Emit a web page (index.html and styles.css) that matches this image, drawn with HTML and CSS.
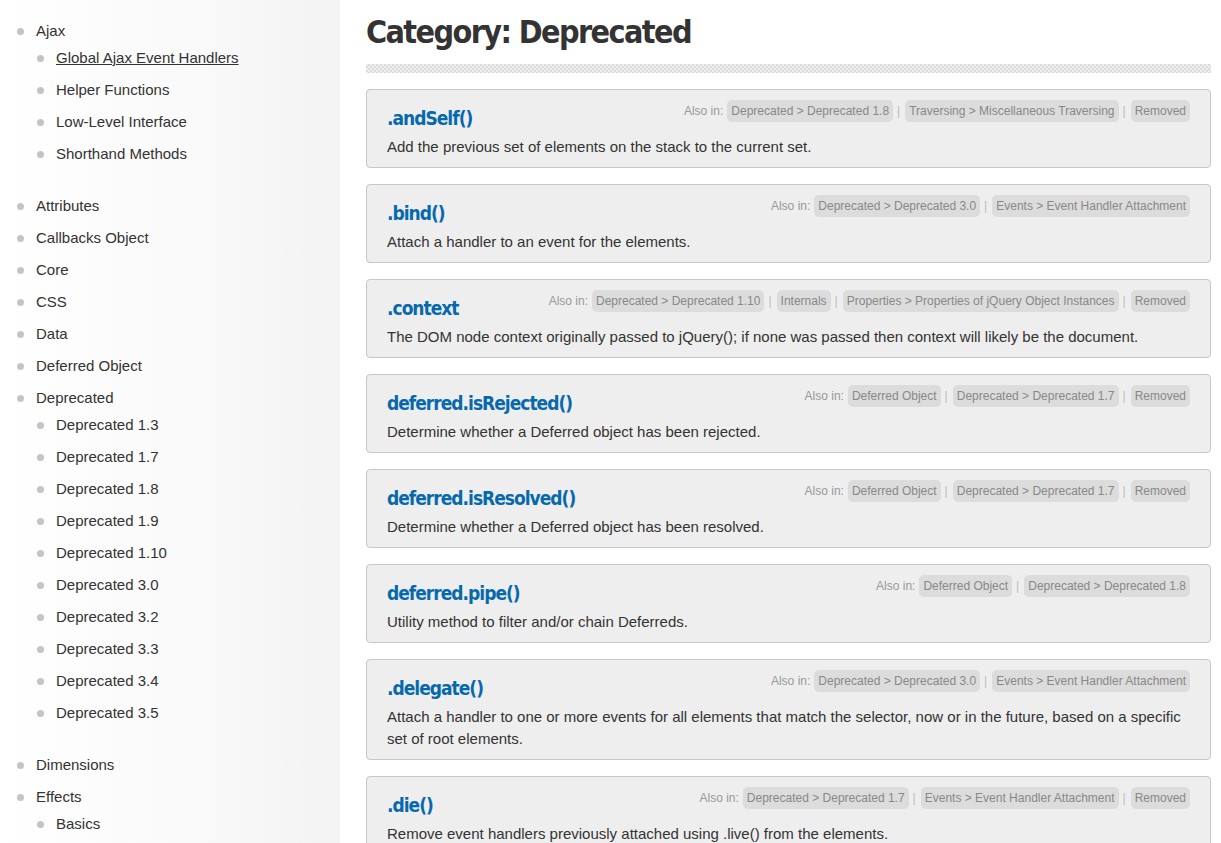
FILE: index.html
```html
<!DOCTYPE html>
<html>
<head>
<meta charset="utf-8">
<link rel="stylesheet" href="styles.css">
</head>
<body>
<div class="page">
  <aside class="sidebar">
    <ul class="nav">
      <li><span>Ajax</span>
        <ul class="sub">
          <li><a class="u">Global Ajax Event Handlers</a></li>
          <li>Helper Functions</li>
          <li>Low-Level Interface</li>
          <li>Shorthand Methods</li>
        </ul>
      </li>
      <li>Attributes</li>
      <li>Callbacks Object</li>
      <li>Core</li>
      <li>CSS</li>
      <li>Data</li>
      <li>Deferred Object</li>
      <li><span>Deprecated</span>
        <ul class="sub">
          <li>Deprecated 1.3</li>
          <li>Deprecated 1.7</li>
          <li>Deprecated 1.8</li>
          <li>Deprecated 1.9</li>
          <li>Deprecated 1.10</li>
          <li>Deprecated 3.0</li>
          <li>Deprecated 3.2</li>
          <li>Deprecated 3.3</li>
          <li>Deprecated 3.4</li>
          <li>Deprecated 3.5</li>
        </ul>
      </li>
      <li>Dimensions</li>
      <li><span>Effects</span>
        <ul class="sub">
          <li>Basics</li>
        </ul>
      </li>
    </ul>
  </aside>
  <main class="main">
    <h1 class="title">Category: Deprecated</h1>
    <div class="hatch"></div>

    <article class="card">
      <div class="head">
        <h2 class="name">.andSelf()</h2>
        <div class="also">Also in: <span class="tag">Deprecated &gt; Deprecated 1.8</span><span class="sep">|</span><span class="tag">Traversing &gt; Miscellaneous Traversing</span><span class="sep">|</span><span class="tag">Removed</span></div>
      </div>
      <p class="desc">Add the previous set of elements on the stack to the current set.</p>
    </article>

    <article class="card">
      <div class="head">
        <h2 class="name">.bind()</h2>
        <div class="also">Also in: <span class="tag">Deprecated &gt; Deprecated 3.0</span><span class="sep">|</span><span class="tag">Events &gt; Event Handler Attachment</span></div>
      </div>
      <p class="desc">Attach a handler to an event for the elements.</p>
    </article>

    <article class="card">
      <div class="head">
        <h2 class="name">.context</h2>
        <div class="also">Also in: <span class="tag">Deprecated &gt; Deprecated 1.10</span><span class="sep">|</span><span class="tag">Internals</span><span class="sep">|</span><span class="tag">Properties &gt; Properties of jQuery Object Instances</span><span class="sep">|</span><span class="tag">Removed</span></div>
      </div>
      <p class="desc">The DOM node context originally passed to jQuery(); if none was passed then context will likely be the document.</p>
    </article>

    <article class="card">
      <div class="head">
        <h2 class="name">deferred.isRejected()</h2>
        <div class="also">Also in: <span class="tag">Deferred Object</span><span class="sep">|</span><span class="tag">Deprecated &gt; Deprecated 1.7</span><span class="sep">|</span><span class="tag">Removed</span></div>
      </div>
      <p class="desc">Determine whether a Deferred object has been rejected.</p>
    </article>

    <article class="card">
      <div class="head">
        <h2 class="name">deferred.isResolved()</h2>
        <div class="also">Also in: <span class="tag">Deferred Object</span><span class="sep">|</span><span class="tag">Deprecated &gt; Deprecated 1.7</span><span class="sep">|</span><span class="tag">Removed</span></div>
      </div>
      <p class="desc">Determine whether a Deferred object has been resolved.</p>
    </article>

    <article class="card">
      <div class="head">
        <h2 class="name">deferred.pipe()</h2>
        <div class="also">Also in: <span class="tag">Deferred Object</span><span class="sep">|</span><span class="tag">Deprecated &gt; Deprecated 1.8</span></div>
      </div>
      <p class="desc">Utility method to filter and/or chain Deferreds.</p>
    </article>

    <article class="card">
      <div class="head">
        <h2 class="name">.delegate()</h2>
        <div class="also">Also in: <span class="tag">Deprecated &gt; Deprecated 3.0</span><span class="sep">|</span><span class="tag">Events &gt; Event Handler Attachment</span></div>
      </div>
      <p class="desc">Attach a handler to one or more events for all elements that match the selector, now or in the future, based on a specific set of root elements.</p>
    </article>

    <article class="card">
      <div class="head">
        <h2 class="name">.die()</h2>
        <div class="also">Also in: <span class="tag">Deprecated &gt; Deprecated 1.7</span><span class="sep">|</span><span class="tag">Events &gt; Event Handler Attachment</span><span class="sep">|</span><span class="tag">Removed</span></div>
      </div>
      <p class="desc">Remove event handlers previously attached using .live() from the elements.</p>
    </article>
  </main>
</div>
</body>
</html>
```
FILE: styles.css
```css
html, body {
  margin: 0;
  padding: 0;
  background: #fff;
  overflow: hidden;
}
body {
  font-family: "Liberation Sans", Arial, sans-serif;
  color: #333;
  height: 843px;
}
.page {
  display: flex;
  align-items: stretch;
  height: 843px;
}
.sidebar {
  width: 340px;
  flex: none;
  background: linear-gradient(to right, #ffffff 0%, #f9f9f9 60%, #f3f3f3 100%);
  padding-top: 20px;
  box-sizing: border-box;
}
.nav, .sub {
  list-style: none;
  margin: 0;
  padding: 0;
  display: flex;
  flex-direction: column;
  gap: 10px;
}
.nav {
  padding-left: 36px;
}
.sub {
  padding-left: 20px;
  margin-top: 5px;
  padding-bottom: 20px;
}
.nav li {
  font-size: 15px;
  line-height: 22px;
  color: #333;
  position: relative;
}
.nav li::before {
  content: "";
  position: absolute;
  left: -19px;
  top: 8px;
  width: 7px;
  height: 7px;
  border-radius: 50%;
  background: #c4c4c4;
}
.nav li > span { display: block; }
.u {
  text-decoration: underline;
  color: #333;
}
.main {
  flex: 1;
  padding: 0 10px 0 26px;
  min-width: 0;
}
.title {
  margin: 11px 0 0;
  font-family: "DejaVu Sans", sans-serif;
  font-stretch: condensed;
  font-weight: bold;
  font-size: 32px;
  line-height: 42px;
  color: #333;
  letter-spacing: -1.6px;
}
.hatch {
  margin-top: 11px;
  height: 9px;
  background: repeating-conic-gradient(#dadada 0 25%, #f0f0f0 0 50%) 0 0 / 4px 4px;
}
.card {
  margin-top: 16px;
  background: #eee;
  border: 1px solid #c7c7c7;
  border-radius: 4px;
  padding: 10px 20px 9px;
}
.head {
  display: flex;
  justify-content: space-between;
  align-items: flex-start;
}
.name {
  margin: 6px 0 0;
  font-family: "DejaVu Sans", sans-serif;
  font-stretch: condensed;
  font-weight: bold;
  font-size: 19px;
  line-height: 24px;
  color: #0769ad;
  white-space: nowrap;
  letter-spacing: -1px;
}
.also {
  font-size: 12px;
  line-height: 14px;
  color: #999;
  display: flex;
  align-items: center;
  white-space: nowrap;
}
.tag {
  margin-left: 4px;
  background: #dcdcdc;
  color: #888;
  border-radius: 5px;
  padding: 4px 4px;
}
.sep {
  color: #bbb;
  margin: 0 1px 0 4px;
}
.desc {
  margin: 6px 0 0;
  font-size: 15px;
  line-height: 22px;
  color: #333;
}
```
